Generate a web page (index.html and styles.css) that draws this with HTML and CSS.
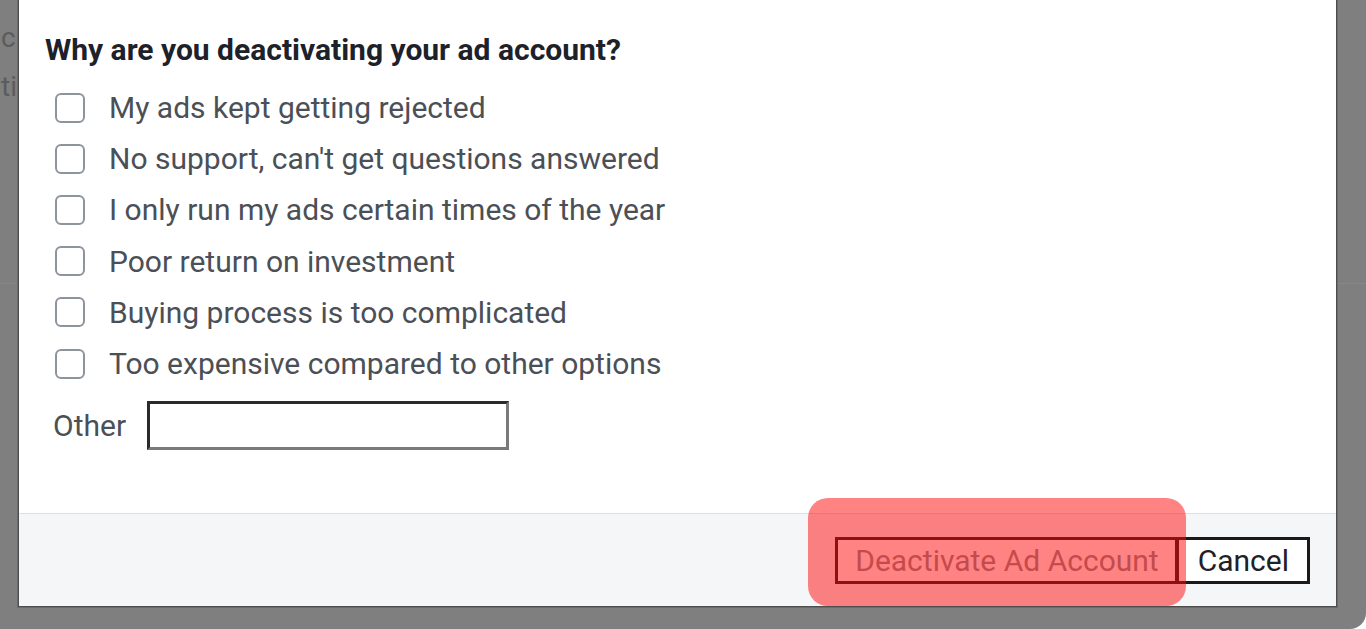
FILE: index.html
```html
<!DOCTYPE html>
<html>
<head>
  <meta charset="utf-8">
  <title>Deactivate ad account</title>
  <link rel="stylesheet" href="styles.css">
</head>
<body>
  <div class="backdrop">
    <div class="behind">
      <p class="behind-line">c</p>
      <p class="behind-line">ti</p>
      <hr class="behind-rule">
    </div>
  </div>

  <div class="dialog">
    <div class="dialog-body">
      <h2 class="question">Why are you deactivating your ad account?</h2>
      <ul class="reasons">
        <li class="reason"><span class="box"></span>My ads kept getting rejected</li>
        <li class="reason"><span class="box"></span>No support, can't get questions answered</li>
        <li class="reason"><span class="box"></span>I only run my ads certain times of the year</li>
        <li class="reason"><span class="box"></span>Poor return on investment</li>
        <li class="reason"><span class="box"></span>Buying process is too complicated</li>
        <li class="reason"><span class="box"></span>Too expensive compared to other options</li>
      </ul>
      <div class="other">
        <span class="other-label">Other</span>
        <span class="other-input"></span>
      </div>
    </div>
    <div class="dialog-foot">
      <span class="btn btn-deactivate">Deactivate Ad Account</span>
      <span class="btn btn-cancel">Cancel</span>
      <span class="highlight"></span>
    </div>
  </div>
</body>
</html>
```

FILE: styles.css
```css
html, body {
  margin: 0;
  padding: 0;
  width: 1366px;
  height: 629px;
  overflow: hidden;
  background: #ffffff;
}
body {
  font-family: Roboto, "Liberation Sans", sans-serif;
  position: relative;
}
.backdrop {
  height: 629px;
  background: #7f7f7f;
  border-bottom-right-radius: 16px;
}
.behind {
  padding-top: 20px;
}
.behind-line {
  margin: 0 0 13px 1px;
  font-size: 28px;
  line-height: 36px;
  color: #5c5c5c;
}
.behind-rule {
  margin: 178px 0 0 0;
  border: none;
  border-top: 1px solid #878787;
}
.dialog {
  position: absolute;
  left: 18px;
  top: 0;
  width: 1317px;
  border: 1px solid #4e4e4e;
  border-top: none;
  background: #ffffff;
  box-shadow: 0 0 0 1px #6a6a6a;
}
.dialog-body {
  padding: 32px 26px 0 26px;
  height: 481px;
}
.question {
  margin: 0 0 14px 0;
  font-size: 30px;
  line-height: 36px;
  font-weight: bold;
  color: #1d2129;
}
.reasons {
  list-style: none;
  margin: 0;
  padding: 0 0 0 10px;
}
.reason {
  display: flex;
  align-items: center;
  gap: 24px;
  height: 51.2px;
  font-size: 30px;
  color: #4b4f56;
}
.box {
  width: 26px;
  height: 26px;
  border: 2px solid #8d949e;
  border-radius: 6px;
  box-sizing: content-box;
}
.other {
  display: flex;
  align-items: center;
  gap: 21px;
  margin: 12px 0 0 8px;
  font-size: 30px;
  color: #4b4f56;
}
.other-input {
  width: 356px;
  height: 43px;
  border: 3px solid #2a2a2a;
  border-right-color: #7a7a7a;
  border-bottom-color: #7a7a7a;
  background: #ffffff;
}
.dialog-foot {
  position: relative;
  display: flex;
  justify-content: flex-end;
  padding: 23px 26px 22px 0;
  border-top: 1px solid #dddfe2;
  background: #f5f6f8;
}
.btn {
  display: flex;
  align-items: center;
  height: 41px;
  border: 3px solid #1a1a1a;
  font-size: 30px;
  background: #ffffff;
}
.btn-deactivate {
  padding: 0 16px 0 17px;
  color: #8a8d91;
}
.btn-cancel {
  padding: 0 18px 0 19px;
  color: #1d2129;
  border-left-width: 1px;
}
.highlight {
  position: absolute;
  left: 789px;
  top: -16px;
  width: 378px;
  height: 108px;
  border-radius: 20px;
  background: rgba(255, 8, 8, 0.5);
}
```
